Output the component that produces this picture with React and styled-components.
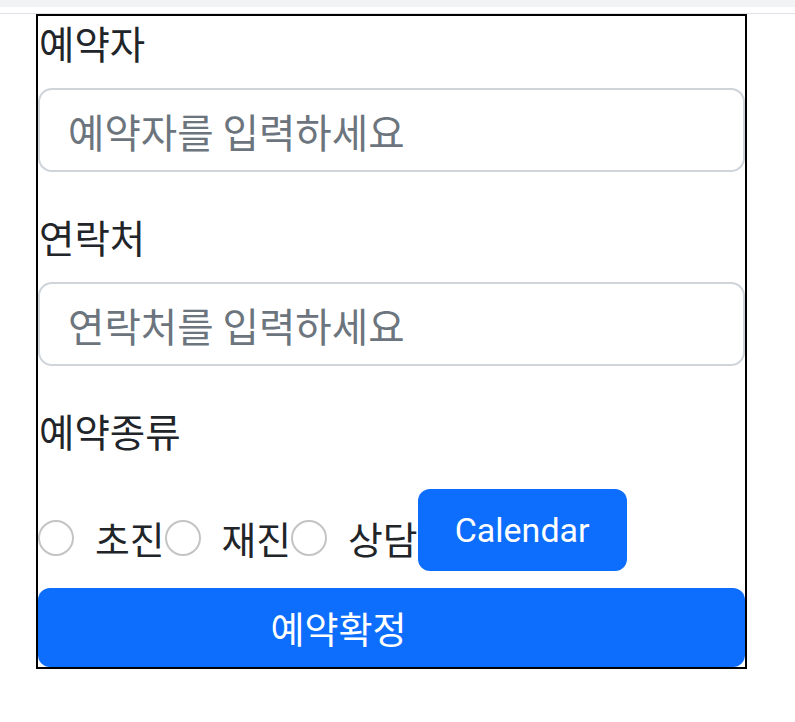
import React from "react";
import styled, { createGlobalStyle } from "styled-components";

const Global = createGlobalStyle`
  html, body { margin: 0; padding: 0; background: #fff; }
  body { font-family: "Noto Sans CJK KR", "Noto Sans", sans-serif; color: #212529; }
  * { box-sizing: border-box; }
`;

const TopBar = styled.div`
  height: 7px;
  background: #f1f3f5;
`;

const Divider = styled.div`
  margin-top: 6px;
  height: 1px;
  background: #dee2e6;
`;

const Form = styled.form`
  margin-left: 36px;
  width: 711px;
  border: 2px solid #000;
  padding-top: 2px;
  display: flex;
  flex-direction: column;
`;

const Field = styled.div`
  display: flex;
  flex-direction: column;
  margin-bottom: ${(p) => p.$mb || 0}px;
`;

const Label = styled.label`
  font-family: "Noto Sans CJK KR", sans-serif;
  font-size: 38.5px;
  line-height: 48px;
  height: 48px;
  color: #212529;
  padding-left: 1px;
  margin-bottom: ${(p) => (p.$last ? 4 : 22)}px;
`;

const Input = styled.input`
  width: 100%;
  height: 84px;
  border: 2px solid #ced4da;
  border-radius: 14px;
  padding: 0 28px;
  font-family: "Noto Sans CJK KR", sans-serif;
  font-size: 39.6px;
  color: #212529;
  background: #fff;
  outline: none;
  &::placeholder { color: #6c757d; }
`;

const RadioRow = styled.div`
  display: flex;
  align-items: center;
  margin-top: 31px;
`;

const RadioOption = styled.label`
  display: flex;
  align-items: center;
  margin-top: 16px;
  font-family: "Noto Sans CJK KR", sans-serif;
  font-size: 37.8px;
  line-height: 40px;
  color: #212529;
`;

const Radio = styled.input.attrs({ type: "radio" })`
  appearance: none;
  -webkit-appearance: none;
  width: 36px;
  height: 36px;
  margin: 0 21px 0 0;
  border: 2px solid #c4c4c4;
  border-radius: 50%;
  background: #fff;
  flex-shrink: 0;
`;

const CalendarButton = styled.button`
  width: 209px;
  height: 82px;
  border: none;
  border-radius: 12px;
  background: #0d6efd;
  color: #fff;
  font-family: Roboto, "Open Sans", sans-serif;
  font-size: 34px;
  padding: 0;
  cursor: pointer;
`;

const SubmitButton = styled.button`
  margin-top: 17px;
  width: 100%;
  height: 79px;
  border: none;
  border-radius: 12px;
  background: #0d6efd;
  color: #fff;
  font-family: "Noto Sans CJK KR", sans-serif;
  font-size: 37px;
  padding: 0 106px 0 0;
  text-align: center;
  cursor: pointer;
`;

export default function App() {
  return (
    <>
      <Global />
      <TopBar />
      <Divider />
      <Form onSubmit={(e) => e.preventDefault()}>
        <Field $mb={40}>
          <Label>예약자</Label>
          <Input placeholder="예약자를 입력하세요" />
        </Field>
        <Field $mb={40}>
          <Label>연락처</Label>
          <Input placeholder="연락처를 입력하세요" />
        </Field>
        <Field>
          <Label as="div" $last>예약종류</Label>
        </Field>
        <RadioRow>
          <RadioOption>
            <Radio name="kind" />
            초진
          </RadioOption>
          <RadioOption>
            <Radio name="kind" />
            재진
          </RadioOption>
          <RadioOption>
            <Radio name="kind" />
            상담
          </RadioOption>
          <CalendarButton type="button">Calendar</CalendarButton>
        </RadioRow>
        <SubmitButton type="submit">예약확정</SubmitButton>
      </Form>
    </>
  );
}
